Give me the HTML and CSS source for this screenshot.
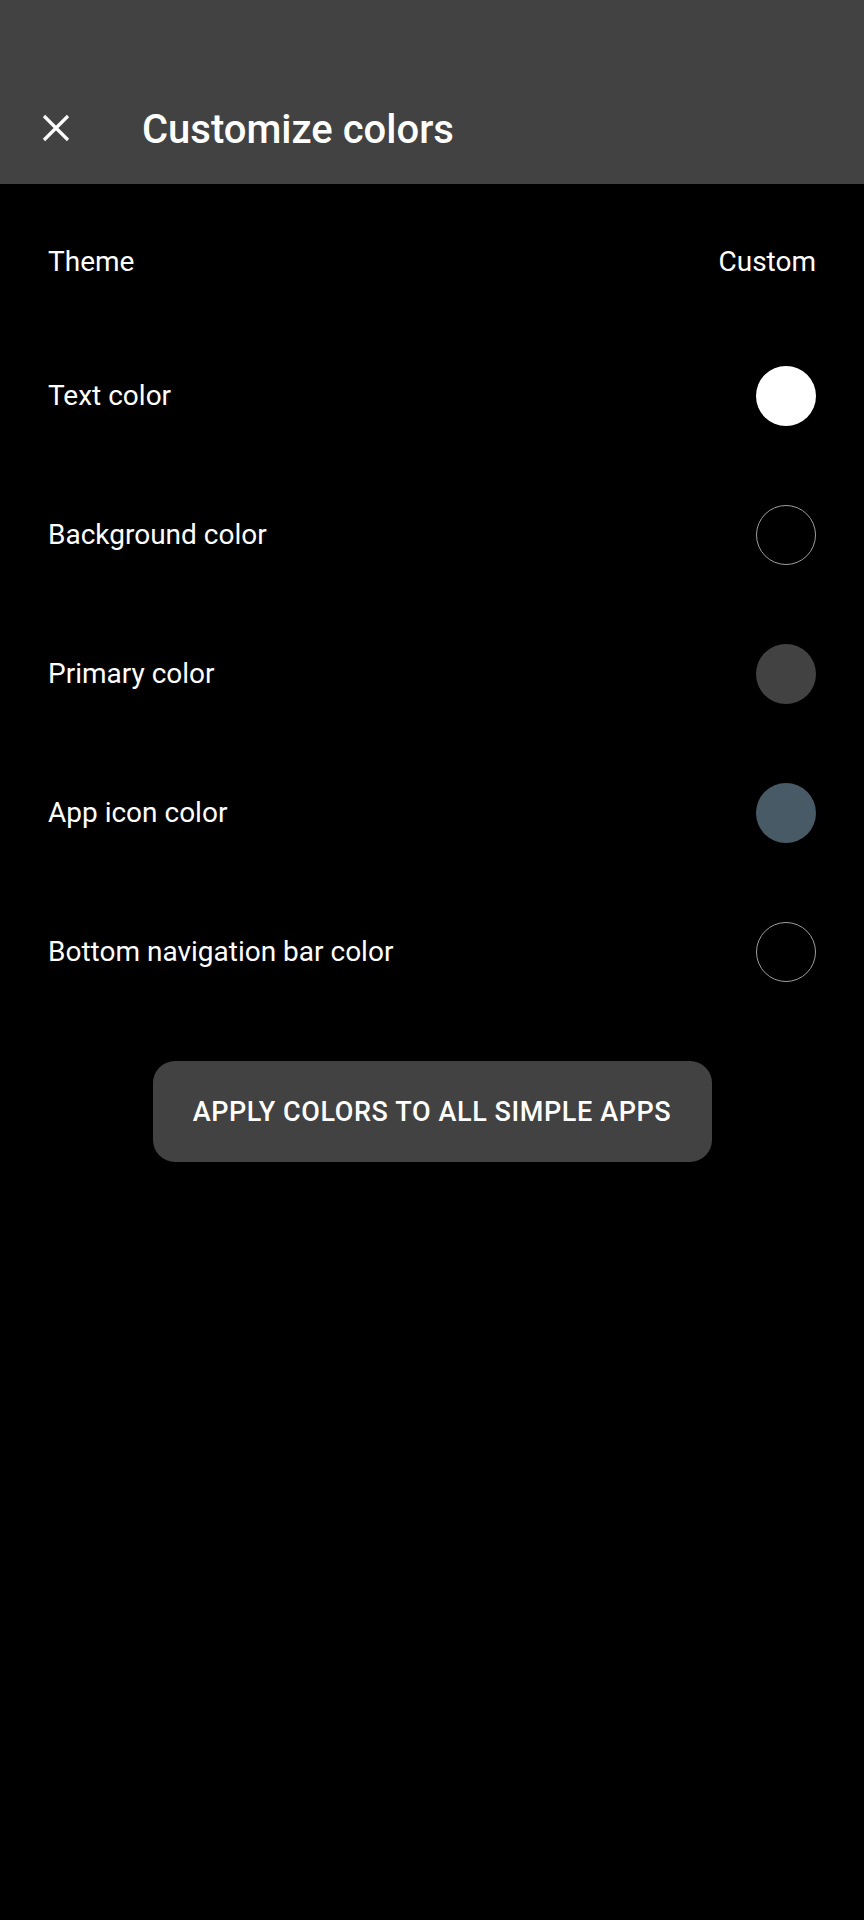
FILE: index.html
```html
<!DOCTYPE html>
<html lang="en">
<head>
    <meta charset="UTF-8" />
    <meta name="viewport" content="width=device-width, initial-scale=1.0" />
    <title>Customize colors</title>
    <link rel="stylesheet" href="styles.css">
</head>
<body>
    <header class="toolbar">
        <button class="close-btn" aria-label="Close">
            <svg width="28" height="28" viewBox="0 0 28 28">
                <path d="M2 2 L26 26 M26 2 L2 26" stroke="#fff" stroke-width="3.2" fill="none" />
            </svg>
        </button>
        <h1 class="toolbar-title">Customize colors</h1>
    </header>

    <main class="settings">
        <div class="setting-row theme-row">
            <span class="setting-label">Theme</span>
            <span class="setting-value">Custom</span>
        </div>
        <div class="setting-row">
            <span class="setting-label">Text color</span>
            <span class="swatch swatch-white"></span>
        </div>
        <div class="setting-row">
            <span class="setting-label">Background color</span>
            <span class="swatch swatch-outline"></span>
        </div>
        <div class="setting-row">
            <span class="setting-label">Primary color</span>
            <span class="swatch swatch-primary"></span>
        </div>
        <div class="setting-row">
            <span class="setting-label">App icon color</span>
            <span class="swatch swatch-icon"></span>
        </div>
        <div class="setting-row">
            <span class="setting-label">Bottom navigation bar color</span>
            <span class="swatch swatch-outline"></span>
        </div>

        <div class="apply-wrap">
            <button class="apply-btn">APPLY COLORS TO ALL SIMPLE APPS</button>
        </div>
    </main>
</body>
</html>
```

FILE: styles.css
```css
body {
    margin: 0;
    background: #000;
    color: #fff;
    font-family: Roboto, "Noto Sans", sans-serif;
}

/* Top app bar */
.toolbar {
    height: 184px;
    box-sizing: border-box;
    padding-top: 72px;
    background: #424242;
    display: flex;
    align-items: center;
}

.toolbar .close-btn,
.toolbar-title {
    height: 112px;
}

.close-btn {
    width: 112px;
    padding: 0;
    border: none;
    background: transparent;
    display: flex;
    align-items: center;
    justify-content: center;
}

.toolbar-title {
    margin: 3px 0 0 30px;
    display: flex;
    align-items: center;
    font-size: 40px;
    font-weight: 500;
}

/* Settings list */
.settings {
    padding-top: 6px;
}

.setting-row {
    height: 139px;
    padding: 0 48px;
    display: flex;
    align-items: center;
    justify-content: space-between;
    font-size: 28px;
}

.theme-row {
    height: 136px;
    box-sizing: border-box;
    padding-top: 6px;
}

.swatch {
    width: 60px;
    height: 60px;
    box-sizing: border-box;
    border-radius: 50%;
}

.swatch-white {
    background: #fff;
}

.swatch-outline {
    border: 1.5px solid #9e9e9e;
}

.swatch-primary {
    background: #424242;
}

.swatch-icon {
    background: #475a66;
}

.apply-wrap {
    padding-top: 40px;
    display: flex;
    justify-content: center;
}

.apply-btn {
    width: 559px;
    height: 101px;
    border: none;
    border-radius: 22px;
    background: #424242;
    color: #fff;
    font-family: Roboto, "Noto Sans", sans-serif;
    font-size: 27px;
    font-weight: 500;
    letter-spacing: 0.6px;
}
```
